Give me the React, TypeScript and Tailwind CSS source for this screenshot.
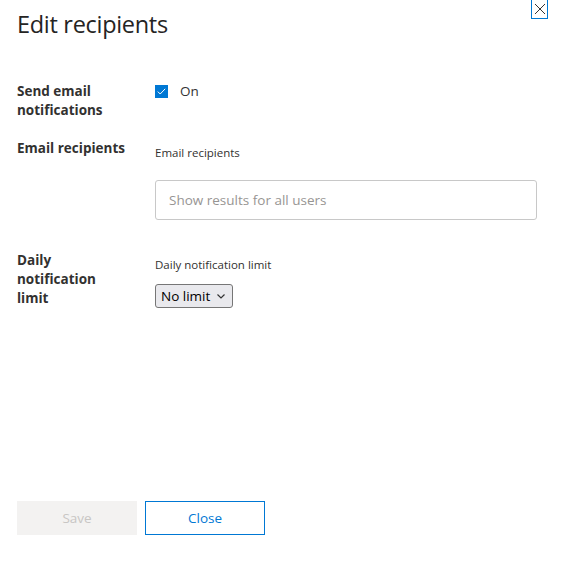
import { useState } from "react";

function Check() {
  return (
    <svg width="9" height="7" viewBox="0 0 9 7" fill="none">
      <path d="M0.8 3.6 L3.2 6 L8.2 0.8" stroke="white" strokeWidth="1" />
    </svg>
  );
}

export default function App() {
  const [on, setOn] = useState(true);

  return (
    <div className="relative flex flex-col w-[562px] h-[571px] bg-white text-[#323130] font-['Open_Sans',sans-serif] overflow-hidden">
      <button className="absolute right-[14px] top-[-2px] w-[17px] h-[21px] border border-[#0078d4] flex items-center justify-center">
        <svg width="12" height="12" viewBox="0 0 12 12">
          <path d="M1 1 L11 11 M11 1 L1 11" stroke="#333" strokeWidth="1" />
        </svg>
      </button>

      <div className="px-[17px] pt-[8px]">
        <h1 className="text-[23.5px] leading-[32px] font-normal tracking-[-0.3px] text-[#252423]">Edit recipients</h1>

        <div className="mt-[42px] grid grid-cols-[138px_1fr] gap-y-[19px]">
          <div className="text-[13.5px] font-bold leading-[19px] w-[108px]">Send email notifications</div>
          <div className="flex items-center gap-[12px] h-[19px]">
            <button
              onClick={() => setOn(!on)}
              className={`w-[13px] h-[13px] flex items-center justify-center ${on ? "bg-[#0078d4]" : "border border-[#333]"}`}
            >
              {on && <Check />}
            </button>
            <span className="text-[13.5px] text-[#333]">On</span>
          </div>

          <div className="text-[13.5px] font-bold leading-[19px] w-[108px]">Email recipients</div>
          <div className="pt-[6px]">
            <div className="text-[11.5px] leading-[16px] text-[#323130]">Email recipients</div>
            <input
              placeholder="Show results for all users"
              className="mt-[19px] w-[382px] h-[40px] border border-[#c8c8c8] rounded-[3px] px-[13px] text-[13.5px] placeholder:text-[#979593] outline-none"
            />
          </div>

          <div className="mt-[12px] text-[13.5px] font-bold leading-[19px] w-[108px]">Daily notification limit</div>
          <div className="mt-[12px] pt-[6px]">
            <div className="text-[11.5px] leading-[16px] text-[#323130]">Daily notification limit</div>
            <div className="mt-[11px] inline-flex items-center gap-[7px] h-[24px] pl-[5px] pr-[7px] bg-[#e9e9ed] border border-[#767676] rounded-[3px] text-[13.5px] text-black">
              No limit
              <svg width="8" height="5" viewBox="0 0 8 5">
                <path d="M0.5 0.5 L4 4 L7.5 0.5" stroke="#333" strokeWidth="1.2" fill="none" />
              </svg>
            </div>
          </div>
        </div>
      </div>

      <div className="mt-auto mb-[36px] px-[17px] flex gap-[8px]">
        <button disabled className="w-[120px] h-[34px] bg-[#f3f2f1] text-[#c8c6c4] text-[13.5px]">Save</button>
        <button className="w-[120px] h-[34px] border border-[#0078d4] text-[#0078d4] text-[13.5px]">Close</button>
      </div>
    </div>
  );
}
